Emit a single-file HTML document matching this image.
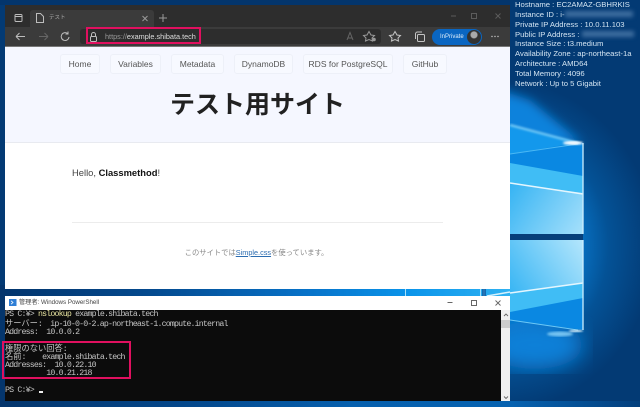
<!DOCTYPE html>
<html><head><meta charset="utf-8">
<style>
html,body{margin:0;padding:0;width:640px;height:407px;overflow:hidden;background:#02386e}
*{box-sizing:border-box}
.a{position:absolute;white-space:nowrap}
body{font-family:"Liberation Sans","Noto Sans CJK JP",sans-serif}
.btn{position:absolute;top:54px;height:20px;border:1px solid #edf0f8;border-radius:3px;background:#f7f9ff;color:#555;font-size:8.5px;line-height:18px;text-align:center}
.l{position:absolute;left:5px;height:9px;font:8.26px/9px "Liberation Mono","Noto Sans CJK JP",monospace;color:#c4c4c4;white-space:pre;letter-spacing:-.826px}
.l i{font-style:normal;letter-spacing:0;font-family:"Noto Sans CJK JP",monospace;line-height:9px}
#wrap{position:absolute;left:0;top:0;width:640px;height:407px;filter:blur(.25px)}
</style></head><body>
<div id="wrap">
<svg class="a" style="left:0;top:0" width="640" height="407" viewBox="0 0 640 407">
<defs>
<radialGradient id="g" gradientUnits="userSpaceOnUse" cx="0" cy="0" r="1" gradientTransform="translate(500 245) scale(155 165)">
<stop offset="0" stop-color="#0a8ae4"/><stop offset=".5" stop-color="#0772c4"/><stop offset=".7" stop-color="#045296"/><stop offset="1" stop-color="#033a74"/></radialGradient>
<linearGradient id="p1" x1="510" y1="185" x2="583" y2="234" gradientUnits="userSpaceOnUse"><stop offset="0" stop-color="#36b4f3"/><stop offset="1" stop-color="#a6e0fb"/></linearGradient>
<linearGradient id="p2" x1="510" y1="290" x2="583" y2="240" gradientUnits="userSpaceOnUse"><stop offset="0" stop-color="#3ab6f4"/><stop offset="1" stop-color="#b4e6fc"/></linearGradient>
<linearGradient id="s" x1="0" y1="0" x2="510" y2="0" gradientUnits="userSpaceOnUse"><stop offset="0" stop-color="#03356c"/><stop offset=".3" stop-color="#044a8f"/><stop offset=".6" stop-color="#0772c8"/><stop offset=".8" stop-color="#0a94ea"/><stop offset="1" stop-color="#2fb2f2"/></linearGradient>
<linearGradient id="b" x1="0" y1="0" x2="640" y2="0" gradientUnits="userSpaceOnUse"><stop offset="0" stop-color="#03356c"/><stop offset=".3" stop-color="#04488c"/><stop offset=".55" stop-color="#0660ae"/><stop offset=".8" stop-color="#0662b0"/><stop offset="1" stop-color="#033f7c"/></linearGradient>
<filter id="bl"><feGaussianBlur stdDeviation="5"/></filter>
<filter id="bm"><feGaussianBlur stdDeviation="10"/></filter>
<filter id="bs"><feGaussianBlur stdDeviation="1"/></filter>
</defs>
<rect width="640" height="407" fill="#03356c"/>
<rect width="640" height="407" fill="url(#g)"/>
<path d="M500 90L530 100L582 143L500 143Z" fill="#0b82dc" filter="url(#bl)"/>
<ellipse cx="535" cy="345" rx="48" ry="24" fill="#0a80d8" filter="url(#bm)"/>
<path d="M510 125L583 143V234H510Z" fill="#0a88e2"/>
<path d="M510 125L575 143L510 154Z" fill="#1398ec"/>
<path d="M510 125L578 143" stroke="#7fd0f8" stroke-width="2" fill="none" filter="url(#bs)"/>
<path d="M510 154L578 144" stroke="#4ab8f4" stroke-width="1" fill="none"/>
<path d="M510 163L583 176V234H510Z" fill="#40bdf5"/>
<path d="M510 183L583 193V234H510Z" fill="url(#p1)"/>
<path d="M510 183L583 194" stroke="#e4f6fe" stroke-width="1.600" fill="none"/>
<rect x="510" y="234" width="73" height="6" fill="#073f7a"/>
<path d="M510 240H583V330L510 320Z" fill="#0a88e2"/>
<path d="M510 240H583V298L510 312Z" fill="#40bdf5"/>
<path d="M510 240H583V283L510 293Z" fill="url(#p2)"/>
<path d="M510 293L583 283" stroke="#e4f6fe" stroke-width="1.600" fill="none"/>
<path d="M510 320L578 330" stroke="#6cc8f6" stroke-width="1" fill="none"/>
<rect x="0" y="289" width="510" height="7" fill="url(#s)"/>
<path d="M405.500 289V296M480.500 289V296M484 289V296" stroke="#a8e2fb" stroke-width="1"/>
<rect x="482" y="289" width="4" height="7" fill="#0a4f96" opacity=".7"/>
<path d="M487 296L510 292" stroke="#d8f2fd" stroke-width="1.500"/>
<path d="M583 143V234M583 240V330" stroke="#cdeefd" stroke-width="1.300"/>
<ellipse cx="573" cy="143" rx="10" ry="2" fill="#fff" filter="url(#bs)"/>
<ellipse cx="560" cy="334" rx="13" ry="2.500" fill="#8fd6fa" filter="url(#bs)" opacity=".8"/>
<ellipse cx="576" cy="331" rx="7" ry="1.200" fill="#eafaff" filter="url(#bs)"/>
<rect x="0" y="401" width="640" height="6" fill="url(#b)"/>
<rect x="0" y="285" width="5" height="122" fill="#04356c"/>
<rect x="0" y="0" width="510" height="5" fill="#03356c"/>
</svg>

<!-- info overlay -->
<div class="a" style="left:515px;top:0;font-size:7.7px;line-height:9.85px;color:#d3e4f2">
Hostname : EC2AMAZ-GBHRKIS<br>Instance ID : i-<span style="filter:blur(2px);display:inline-block;background:#3f6e9f;width:68px;height:6px"></span><br>Private IP Address : 10.0.11.103<br>Public IP Address : <span style="display:inline-block;filter:blur(2px);background:#3f6e9f;width:52px;height:6px"></span><br>Instance Size : t3.medium<br>Availability Zone : ap-northeast-1a<br>Architecture : AMD64<br>Total Memory : 4096<br>Network : Up to 5 Gigabit
</div>

<!-- browser -->
<div class="a" style="left:5px;top:5px;width:505px;height:284px;background:#fff;overflow:hidden">
  <div class="a" style="left:0;top:0;width:505px;height:22px;background:#2d2d2d"></div>
  <div class="a" style="left:25px;top:5px;width:124px;height:17px;background:#3b3b3b;border-radius:3px 3px 0 0"></div>
  <div class="a" style="left:0;top:22px;width:505px;height:19px;background:#3b3b3b"></div>
  <div class="a" style="left:75px;top:24px;width:301px;height:15px;background:#2d2d2d;border-radius:3px"></div>
  <div class="a" style="left:0;top:41px;width:505px;height:1px;background:#777"></div>
  <div class="a" style="left:44px;top:8px;font-size:5.500px;line-height:10px;color:#aaa">テスト</div>
  <svg class="a" style="left:0;top:0" width="505" height="41" viewBox="0 0 505 41" fill="none" stroke="#bdbdbd" stroke-width="1">
    <rect x="10" y="9.500" width="7" height="7" rx="1"/><path d="M10 11.500H17"/>
    <path d="M31.500 8.500H35.500L38.500 11.500V17.500H31.500Z"/>
    <path d="M137.500 11L142.500 16M142.500 11L137.500 16" stroke="#999"/>
    <path d="M158 9V17M154 13H162" stroke="#999"/>
    <path d="M11 31.500H20M11 31.500L14.500 28M11 31.500L14.500 35"/>
    <path d="M34 31.500H43M43 31.500L39.500 28M43 31.500L39.500 35" stroke="#666"/>
    <path d="M62.500 28.500A3.900 3.900 0 1 0 64 32M63 26.500V29H60.500"/>
    <rect x="85.500" y="31.500" width="6" height="5" rx="1"/><path d="M86.500 31.500V29.500A2 2 0 0 1 90.500 29.500V31.500"/>
    <path d="M446 11H451" stroke="#5c5c5c"/>
    <rect x="466.500" y="8.500" width="5" height="5" stroke="#5c5c5c"/>
    <path d="M490.500 8.500L495.500 13.500M495.500 8.500L490.500 13.500" stroke="#5c5c5c"/>
    <path d="M342 35L345 27.500L348 35M343 33H347" stroke="#666"/>
    <path d="M364 26.500L366 30L369.500 30.500L367 33L367.500 36L364 34.500L360.500 36L361 33L358.500 30.500L362 30Z" stroke="#999"/>
    <circle cx="369" cy="34.500" r="1.800" fill="#999" stroke="none"/>
    <path d="M390 26.500L392 30L395.500 30.500L393 33L393.500 36L390 34.500L386.500 36L387 33L384.500 30.500L388 30Z" stroke="#c4c4c4"/>
    <rect x="412.500" y="29.500" width="7" height="7" rx="1" stroke="#c4c4c4"/><path d="M410.500 34V29A2 2 0 0 1 412.500 27H417" stroke="#c4c4c4"/>
    <circle cx="487" cy="31.500" r=".7" fill="#ccc" stroke="none"/><circle cx="490" cy="31.500" r=".7" fill="#ccc" stroke="none"/><circle cx="493" cy="31.500" r=".7" fill="#ccc" stroke="none"/>
  </svg>
  <div class="a" style="left:100px;top:24.500px;font-size:7.300px;line-height:13px;color:#999">https://<span style="color:#ddd">example.shibata.tech</span></div>
  <div class="a" style="left:427px;top:24px;width:50px;height:16px;border-radius:8px;background:#0a66c2"></div>
  <div class="a" style="left:435px;top:26px;font-size:6px;line-height:12px;color:#dcecfa">InPrivate</div>
  <div class="a" style="left:462px;top:25px;width:14px;height:14px;border-radius:50%;background:radial-gradient(circle at 50% 35%,#aaa 0 3px,#333 4px)"></div>
  <div class="a" style="left:0;top:42px;width:505px;height:96px;background:#f5f7ff;border-bottom:1px solid #e8eaf0"></div>
  <div class="a" style="left:0;top:82px;width:505px;text-align:center;font-size:25px;line-height:36px;font-weight:700;color:#212121">テスト用サイト</div>
  <div class="a" style="left:67px;top:161px;font-size:9.400px;line-height:14px;color:#444">Hello, <b style="color:#111">Classmethod</b>!</div>
  <div class="a" style="left:67px;top:217px;width:371px;height:1px;background:#ececec"></div>
  <div class="a" style="left:0;top:241px;width:503px;text-align:center;font-size:7.300px;line-height:13px;color:#888">このサイトでは<span style="color:#2b6cb0;text-decoration:underline">Simple.css</span>を使っています。</div>
</div>
<div class="btn" style="left:60px;width:40px">Home</div>
<div class="btn" style="left:110px;width:51px">Variables</div>
<div class="btn" style="left:171px;width:53px">Metadata</div>
<div class="btn" style="left:234px;width:59px">DynamoDB</div>
<div class="btn" style="left:303px;width:90px">RDS for PostgreSQL</div>
<div class="btn" style="left:403px;width:44px">GitHub</div>

<!-- url highlight -->
<div class="a" style="left:86px;top:27px;width:115px;height:17px;border:2px solid #e0105f"></div>

<!-- powershell -->
<div class="a" style="left:5px;top:296px;width:505px;height:105px;background:#fff"></div>
<div class="a" style="left:5px;top:310px;width:496px;height:91px;background:#0c0c0c"></div>
<div class="a" style="left:501px;top:310px;width:9px;height:91px;background:#f0f0f0"></div>
<div class="a" style="left:501px;top:320px;width:9px;height:8px;background:#cdcdcd"></div>
<svg class="a" style="left:0;top:296px" width="510" height="111" fill="none" stroke="#666">
  <rect x="9" y="3" width="7.500" height="7" fill="#2f7fd6" stroke="none"/>
  <path d="M11 4.800L13 6.500L11 8.200" stroke="#fff" stroke-width=".8"/>
  <path d="M447.500 6.500H452.500" stroke-width="1"/>
  <rect x="471.500" y="4.500" width="5" height="5" stroke-width="1"/>
  <path d="M495.500 4.500L500.500 9.500M500.500 4.500L495.500 9.500" stroke-width=".9"/>
  <path d="M504 20L506 18L508 20" stroke-width=".9"/>
  <path d="M504 100.500L506 102.500L508 100.500" stroke-width=".9"/>
</svg>
<div class="a" style="left:19px;top:297px;font-size:6.200px;line-height:12px;color:#444">管理者: Windows PowerShell</div>
<div class="l" style="top:310px">PS C:¥&gt; <span style="color:#e8e4a0">nslookup</span> example.shibata.tech</div>
<div class="l" style="top:319px"><i>サーバー</i>:  ip-10-0-0-2.ap-northeast-1.compute.internal</div>
<div class="l" style="top:327.500px">Address:  10.0.0.2</div>
<div class="l" style="top:343.500px"><i>権限のない回答</i>:</div>
<div class="l" style="top:352px"><i>名前</i>:    example.shibata.tech</div>
<div class="l" style="top:360.500px">Addresses:  10.0.22.10</div>
<div class="l" style="top:368.500px">          10.0.21.218</div>
<div class="l" style="top:385.500px">PS C:¥&gt; </div>
<div class="a" style="left:38.500px;top:391px;width:4.500px;height:2px;background:#eee"></div>
<div class="a" style="left:2px;top:341px;width:129px;height:38px;border:2px solid #e0105f"></div>
</div>
</body></html>
